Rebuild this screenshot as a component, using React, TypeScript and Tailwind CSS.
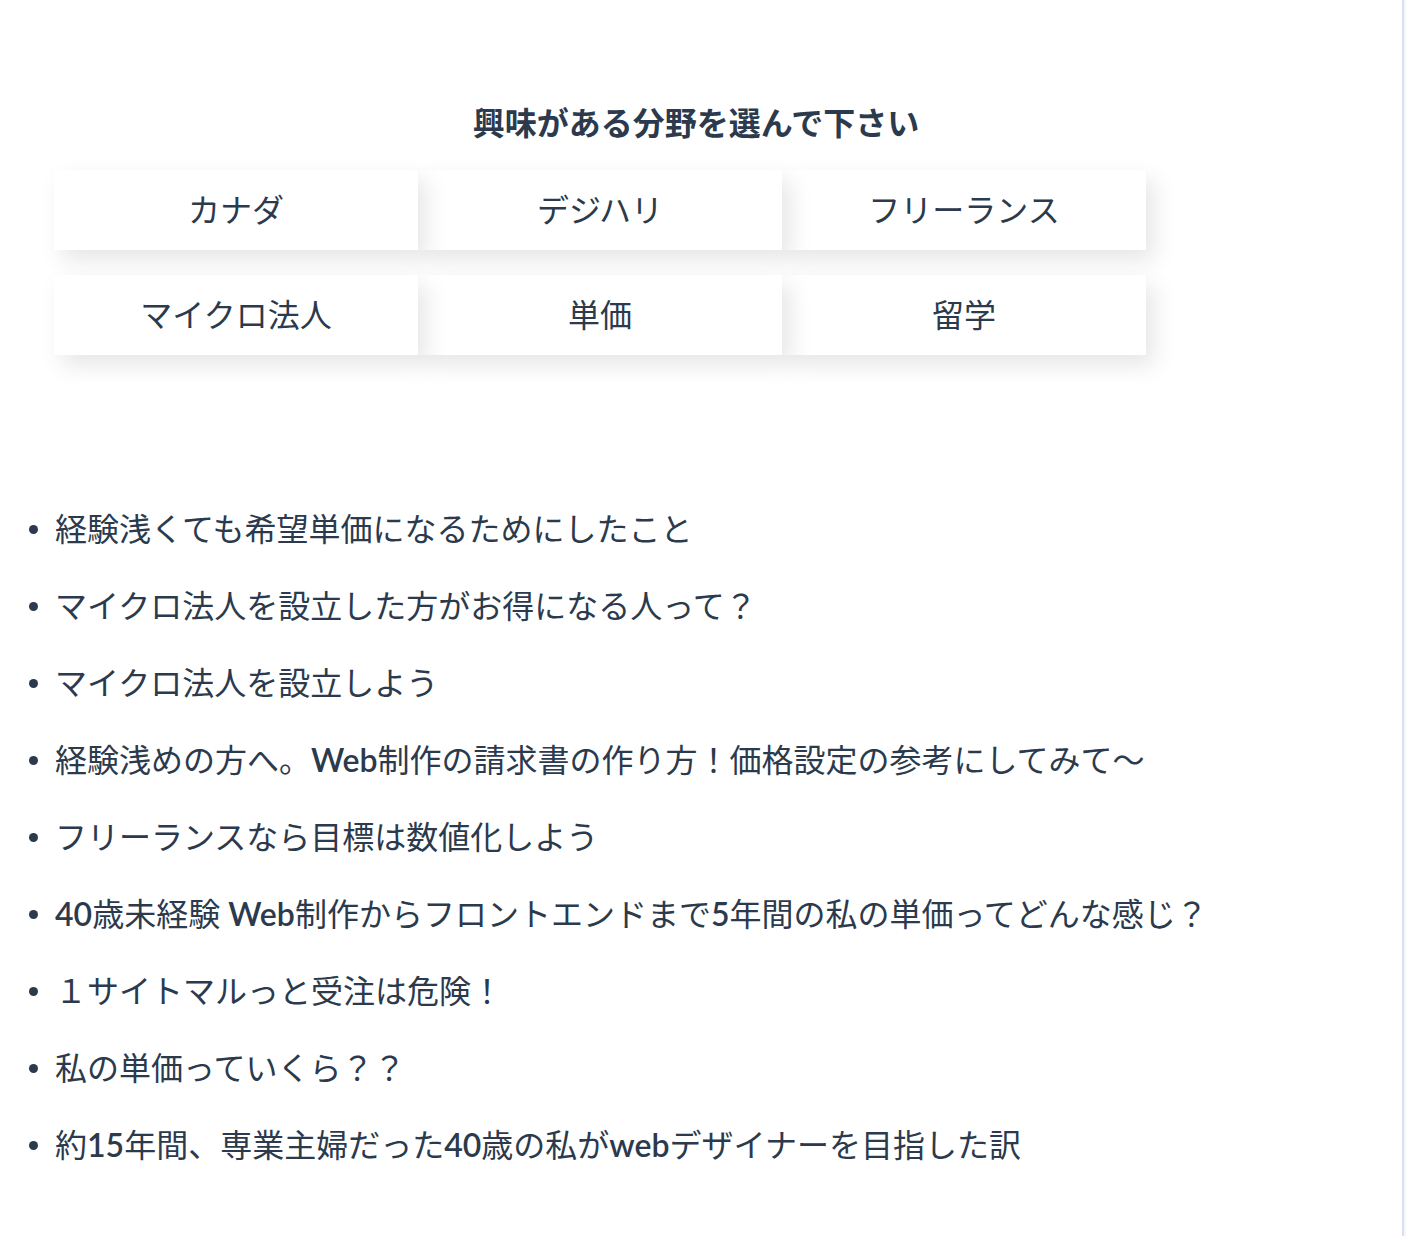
import React from "react"

const categories = ["カナダ", "デジハリ", "フリーランス", "マイクロ法人", "単価", "留学"]

const posts = [
  "経験浅くても希望単価になるためにしたこと",
  "マイクロ法人を設立した方がお得になる人って？",
  "マイクロ法人を設立しよう",
  "経験浅めの方へ。Web制作の請求書の作り方！価格設定の参考にしてみて〜",
  "フリーランスなら目標は数値化しよう",
  "40歳未経験 Web制作からフロントエンドまで5年間の私の単価ってどんな感じ？",
  "１サイトマルっと受注は危険！",
  "私の単価っていくら？？",
  "約15年間、専業主婦だった40歳の私がwebデザイナーを目指した訳",
]

// column order decides stacking so each card's shadow falls over its right neighbour
const zByCol = ["z-30", "z-20", "z-10"]

// latin runs render heavier than the japanese text in the original font
function Mixed({ text }: { text: string }) {
  const parts = text.split(/([A-Za-z0-9]+)/)
  return (
    <>
      {parts.map((part, i) =>
        /^[A-Za-z0-9]+$/.test(part) ? (
          <span key={i} className="font-semibold">
            {part}
          </span>
        ) : (
          <React.Fragment key={i}>{part}</React.Fragment>
        )
      )}
    </>
  )
}

export default function App() {
  return (
    <div
      className="flex min-h-[1236px] w-full bg-white text-[#2b3a4c]"
      style={{ fontFamily: '"Lato", "Noto Sans CJK JP", sans-serif' }}
    >
      <main className="flex-1 pt-[99px]">
        <h2 className="w-[1392px] text-center text-[32px] font-bold leading-[48px]">
          興味がある分野を選んで下さい
        </h2>

        <div className="ml-[54px] mt-[23px] grid grid-cols-[repeat(3,364px)] gap-y-[25px]">
          {categories.map((c, i) => (
            <div
              key={c}
              className={`relative flex h-[80px] items-center justify-center bg-white text-[32px] shadow-[8px_10px_22px_rgba(0,0,0,0.10)] ${zByCol[i % 3]}`}
            >
              {c}
            </div>
          ))}
        </div>

        <ul className="mt-[135px] pl-[29px] text-[32px]">
          {posts.map((p) => (
            <li key={p} className="flex h-[77px] items-center">
              <span className="mt-[2px] h-[9px] w-[9px] shrink-0 rounded-full bg-[#2b3a4c]" />
              <span className="ml-[17px]">
                <Mixed text={p} />
              </span>
            </li>
          ))}
        </ul>
      </main>
      <div className="w-[4px] border-l-2 border-[#d6e1f7] bg-[#f6f6f9]" />
    </div>
  )
}
